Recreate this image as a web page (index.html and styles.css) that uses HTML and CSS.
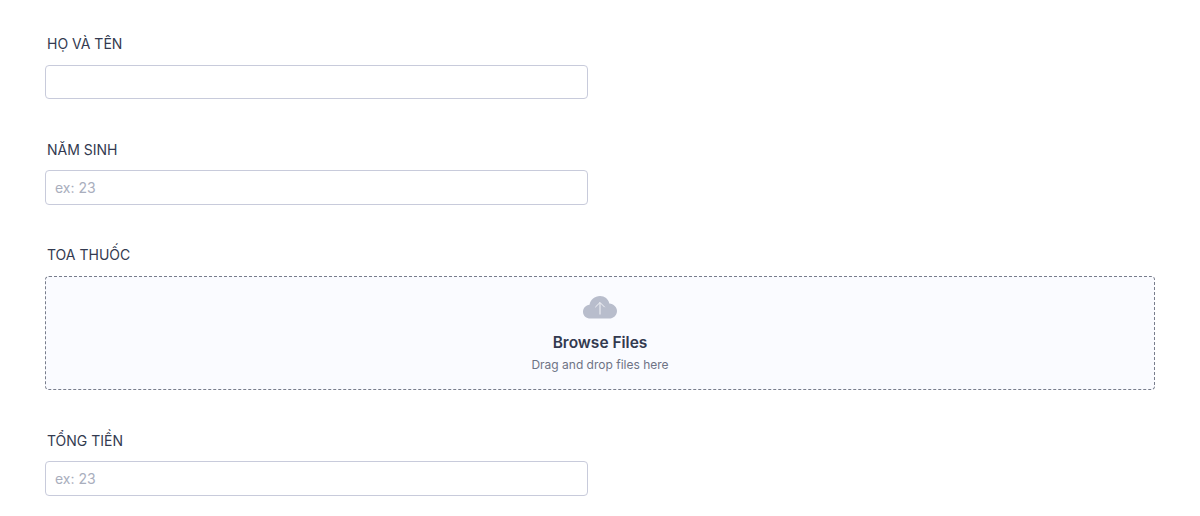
FILE: index.html
```html
<!DOCTYPE html>
<html lang="vi">
<head>
<meta charset="utf-8">
<title>Form</title>
<link rel="stylesheet" href="styles.css">
</head>
<body>
<form class="form">
  <div class="field field-first">
    <label class="label">HỌ VÀ TÊN</label>
    <input class="input" type="text">
  </div>
  <div class="field">
    <label class="label">NĂM SINH</label>
    <input class="input" type="text" placeholder="ex: 23">
  </div>
  <div class="field field-upload">
    <label class="label">TOA THUỐC</label>
    <div class="dropzone">
      <svg class="cloud" width="34" height="24" viewBox="0 0 34 24">
        <path fill="#b8bdcc" d="M17 1c4.700 0 8.400 3.100 9.300 7.400 4.300.3 7.700 3.500 7.700 7.600 0 4.300-3.600 7.600-8 7.600H7.500C3.300 23.600 0 20.600 0 16.700c0-3.600 2.800-6.500 6.500-7C7.400 4.700 11.700 1 17 1z"/>
        <path fill="none" stroke="#f3f4f8" stroke-width="1" d="M17 19.500V7.500M12.300 12.200 17 7.500l4.700 4.700"/>
      </svg>
      <div class="browse">Browse Files</div>
      <div class="hint">Drag and drop files here</div>
    </div>
  </div>
  <div class="field">
    <label class="label">TỔNG TIỀN</label>
    <input class="input" type="text" placeholder="ex: 23">
  </div>
</form>
</body>
</html>
```

FILE: styles.css
```css
html, body { margin: 0; height: 100%; background: #fff; }
body { font-family: Inter, "Open Sans", sans-serif; color: #333a50; overflow: hidden; }

.form { padding: 33px 45px 0; }

.field { margin-bottom: 39px; }
.field-first { margin-bottom: 40px; }
.field-upload { margin-bottom: 40px; }

.label { display: block; height: 20px; line-height: 21px; margin: 0 0 11px 2px; font-size: 14px; font-weight: 400; color: #333a50; }
.field-first .label, .field-upload .label { margin-bottom: 12px; }

.input { display: block; box-sizing: border-box; width: 543px; height: 35px; padding: 0 9px; border: 1px solid #c8cbdb; border-radius: 4px; background: #fff; font-family: inherit; font-size: 14px; color: #333a50; outline: none; }
.field-first .input { height: 34px; }
.input::placeholder { color: #a9aebd; opacity: 1; }

.dropzone { box-sizing: border-box; width: 1110px; height: 114px; border: 1px dashed #787d8c; border-radius: 4px; background: #fafbff; display: flex; flex-direction: column; align-items: center; padding-top: 18px; }
.cloud { display: block; }
.browse { margin-top: 13px; font-size: 15.5px; line-height: 22px; font-weight: 600; color: #333a50; }
.hint { margin-top: 2px; font-size: 12px; line-height: 18px; color: #6e7385; }
```
